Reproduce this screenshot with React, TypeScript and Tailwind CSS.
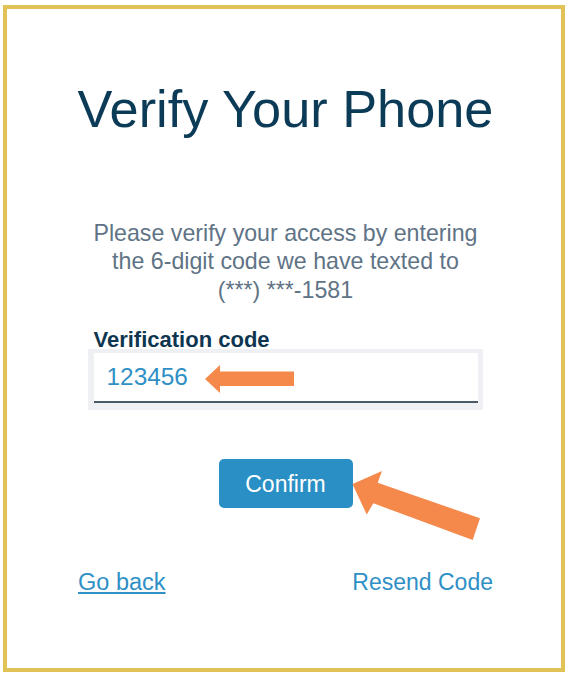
import React from "react";

export default function App() {
  return (
    <div className="relative w-[568px] h-[682px] bg-white pt-[5px] pl-[3px] font-['Liberation_Sans',Arial,sans-serif]">
      <div className="w-[562px] h-[667px] border-4 border-[#e0c257] bg-white">
        <div className="flex flex-col items-center pl-[3px] pt-[70px]">
          <h1 className="text-[52.3px] leading-[60px] text-[#0c3b57] font-normal whitespace-nowrap">
            Verify Your Phone
          </h1>
          <p className="mt-[80px] text-[23.2px] leading-[28.3px] text-[#5f7386] text-center whitespace-nowrap">
            Please verify your access by entering
            <br />
            the 6-digit code we have texted to
            <br />
            (***) ***-1581
          </p>
          <div className="mt-[28px] w-[395px]">
            <label className="block pl-[5.5px] text-[22px] leading-[16px] font-bold text-[#0f3651]">
              Verification code
            </label>
            <div className="mt-[1px] bg-[#eef0f4] pt-[4.5px] px-[5.5px] pb-[7px]">
              <div className="bg-white border-b-2 border-[#4b5a69] pl-[13px] pt-[10px] pb-[10px] text-[24.4px] leading-[28px] text-[#2f90c6]">
                123456
              </div>
            </div>
          </div>
          <button className="mt-[49px] w-[134px] h-[49px] rounded-[5px] bg-[#2a8fc4] text-white text-[23px] leading-[28px]">
            Confirm
          </button>
          <div className="mt-[60px] w-[415px] flex justify-between text-[23px] leading-[28px] text-[#2f90c6]">
            <a className="underline decoration-[1.5px] underline-offset-[2px] cursor-pointer text-[23.5px]">Go back</a>
            <a className="cursor-pointer">Resend Code</a>
          </div>
        </div>
      </div>
      <svg
        className="absolute left-0 top-0 pointer-events-none"
        width="568"
        height="682"
        viewBox="0 0 568 682"
      >
        <polygon
          fill="#f5894b"
          points="205,379 220,365 220,371.5 294,371.5 294,386 220,386 220,393"
        />
        <polygon
          fill="#f5894b"
          points="352.5,484 382,471 377.7,482.7 480,518.3 472.7,540 373.3,503.3 366.7,514.5"
        />
      </svg>
    </div>
  );
}
